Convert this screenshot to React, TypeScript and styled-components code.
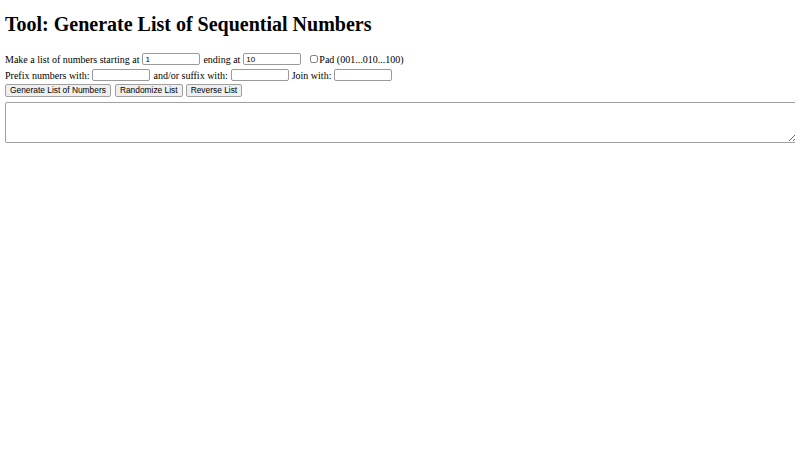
import React, { useState } from 'react';
import styled, { createGlobalStyle } from 'styled-components';

const GlobalStyle = createGlobalStyle`
  body {
    margin: 5px;
    background: #fff;
    color: #000;
    font-family: "Liberation Serif", "Times New Roman", serif;
  }
`;

const Title = styled.h1`
  font-size: 20px;
  font-weight: bold;
  line-height: 23px;
  margin: 8px 0 13px;
`;

const Line = styled.div`
  font-size: 10px;
  height: 16px;
  box-sizing: border-box;
  padding-top: 4px;
  display: flex;
  align-items: center;
  white-space: nowrap;
`;

const Field = styled.input`
  width: 58px;
  height: 12px;
  box-sizing: border-box;
  margin: 0 3px;
  padding: 0 2px;
  align-self: flex-end;
  border: 1px solid #9a9a9a;
  border-radius: 2px;
  font-family: "Liberation Sans", Arial, sans-serif;
  font-size: 8px;
  color: #000;
`;

const Check = styled.input`
  width: 8px;
  height: 8px;
  margin: 0 1px 0 6px;
`;

const ButtonRow = styled.div`
  display: flex;
  align-items: center;
  height: 16px;
  margin-top: 1px;
`;

const Button = styled.button<{ $gap?: number }>`
  height: 13px;
  margin-right: ${p => p.$gap ?? 0}px;
  padding: 0 4px;
  font-family: "Liberation Sans", Arial, sans-serif;
  font-size: 8.4px;
  line-height: 11px;
  background: #efefef;
  border: 1px solid #a0a0a0;
  border-radius: 2px;
  color: #000;
`;

const Output = styled.textarea`
  display: block;
  width: 793px;
  height: 41px;
  box-sizing: border-box;
  margin-top: 4px;
  border: 1px solid #a0a0a0;
  border-radius: 2px;
  resize: vertical;
`;

export default function App() {
  const [start, setStart] = useState('1');
  const [end, setEnd] = useState('10');
  return (
    <>
      <GlobalStyle />
      <Title>Tool: Generate List of Sequential Numbers</Title>
      <Line>
        Make a list of numbers starting at
        <Field value={start} onChange={e => setStart(e.target.value)} />
        ending at
        <Field value={end} onChange={e => setEnd(e.target.value)} />
        <Check type="checkbox" />
        Pad (001...010...100)
      </Line>
      <Line>
        Prefix numbers with:
        <Field />
        and/or suffix with:
        <Field />
        Join with:
        <Field />
      </Line>
      <ButtonRow>
        <Button $gap={4}>Generate List of Numbers</Button>
        <Button $gap={3}>Randomize List</Button>
        <Button>Reverse List</Button>
      </ButtonRow>
      <Output />
    </>
  );
}
